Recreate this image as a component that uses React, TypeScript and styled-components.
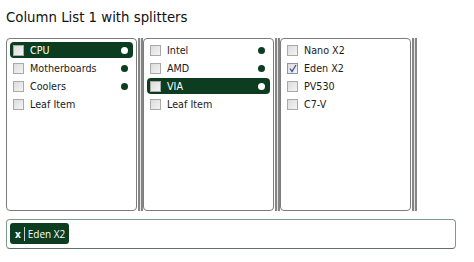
import { FC, Fragment } from 'react';
import styled, { createGlobalStyle } from 'styled-components';

const GlobalStyle = createGlobalStyle`
  html, body {
    margin: 0;
    padding: 0;
    background: #ffffff;
  }
  body {
    font-family: "DejaVu Sans", Verdana, sans-serif;
    color: #111;
  }
`;

const Page = styled.div`
  width: 450px;
  padding: 8px 0 0 6px;
`;

const Title = styled.h1`
  margin: 0;
  font-size: 13.3px;
  font-weight: normal;
  line-height: 20px;
  height: 20px;
  color: #111;
`;

const Columns = styled.div`
  display: flex;
  margin-top: 10px;
  height: 173px;
`;

const Panel = styled.div`
  width: 131px;
  box-sizing: border-box;
  border: 1px solid #7c7c7c;
  border-radius: 4px;
  padding: 3px;
  display: flex;
  flex-direction: column;
  gap: 2px;
`;

const Splitter = styled.div`
  width: 1px;
  margin-left: 1px;
  border-left: 2px solid #858585;
  border-right: 2px solid #858585;
  background: #e4e4e4;
`;

const Row = styled.div<{ $selected?: boolean }>`
  display: flex;
  align-items: center;
  height: 16px;
  padding: 0 5px 0 3px;
  border-radius: 4px;
  background: ${(p) => (p.$selected ? '#0c3d20' : 'transparent')};
  color: ${(p) => (p.$selected ? '#ffffff' : '#1a1a1a')};
  font-size: 9.6px;
`;

const Box = styled.span<{ $checked?: boolean }>`
  position: relative;
  width: 11px;
  height: 11px;
  box-sizing: border-box;
  border: 1px solid ${(p) => (p.$checked ? '#8a94b4' : '#a9a9a9')};
  background: linear-gradient(135deg, #dcdcdc 0%, #f4f4f4 100%);
  margin-right: 6px;
  flex: none;
`;

const Tick = styled.svg`
  position: absolute;
  left: 1px;
  top: 0;
`;

const Label = styled.span`
  flex: 1;
  white-space: nowrap;
`;

const Dot = styled.span<{ $light?: boolean }>`
  width: 7px;
  height: 7px;
  border-radius: 50%;
  background: ${(p) => (p.$light ? '#ffffff' : '#0c3d20')};
  flex: none;
`;

const TagBox = styled.div`
  margin-top: 8px;
  height: 30px;
  box-sizing: border-box;
  border: 1px solid #7f9a8d;
  border-bottom-color: #5e7268;
  border-radius: 4px;
  padding: 3px;
  display: flex;
  align-items: flex-start;
`;

const Tag = styled.div`
  display: flex;
  align-items: center;
  height: 21px;
  padding: 0 4px 0 5px;
  background: #0c3d20;
  border-radius: 3px;
  color: #fff;
  font-family: "Open Sans", "DejaVu Sans", sans-serif;
  font-size: 10px;
`;

const TagClose = styled.span`
  font-weight: bold;
  font-size: 10px;
  padding-right: 3px;
  margin-right: 3px;
  border-right: 1px solid #c8d2cc;
  line-height: 14px;
`;

type Item = { label: string; selected?: boolean; checked?: boolean; dot?: boolean };

const columns: Item[][] = [
  [
    { label: 'CPU', selected: true, dot: true },
    { label: 'Motherboards', dot: true },
    { label: 'Coolers', dot: true },
    { label: 'Leaf Item' },
  ],
  [
    { label: 'Intel', dot: true },
    { label: 'AMD', dot: true },
    { label: 'VIA', selected: true, dot: true },
    { label: 'Leaf Item' },
  ],
  [
    { label: 'Nano X2' },
    { label: 'Eden X2', checked: true },
    { label: 'PV530' },
    { label: 'C7-V' },
  ],
];

const ListRow: FC<{ item: Item }> = ({ item }) => (
  <Row $selected={item.selected}>
    <Box $checked={item.checked}>
      {item.checked && (
        <Tick width="8" height="9" viewBox="0 0 8 9">
          <path d="M1 4.5 L3 7.5 L7 1" fill="none" stroke="#3c4f9a" strokeWidth="1.3" />
        </Tick>
      )}
    </Box>
    <Label>{item.label}</Label>
    {item.dot && <Dot $light={item.selected} />}
  </Row>
);

export default function App() {
  return (
    <Page>
      <GlobalStyle />
      <Title>Column List 1 with splitters</Title>
      <Columns>
        {columns.map((col, i) => (
          <Fragment key={i}>
            <Panel>
              {col.map((item) => (
                <ListRow key={item.label} item={item} />
              ))}
            </Panel>
            <Splitter />
          </Fragment>
        ))}
      </Columns>
      <TagBox>
        <Tag>
          <TagClose>x</TagClose>
          Eden X2
        </Tag>
      </TagBox>
    </Page>
  );
}
